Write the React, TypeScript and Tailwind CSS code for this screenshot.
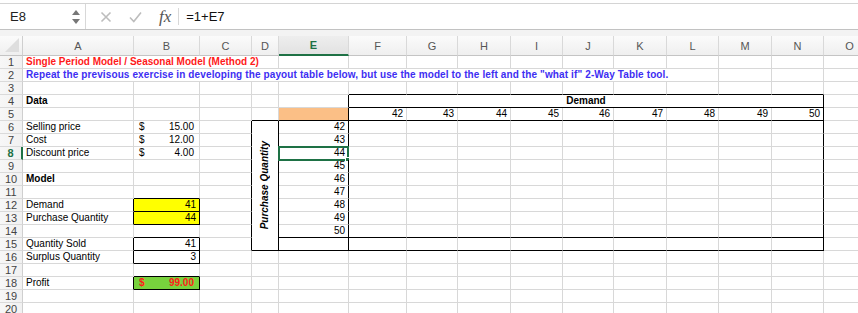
import React from "react";

type Cell = {
  col: number;
  span?: number;
  rows?: number;
  content?: React.ReactNode;
  cls?: string;
  selected?: boolean;
};

const COL_LETTERS = ["A", "B", "C", "D", "E", "F", "G", "H", "I", "J", "K", "L", "M", "N", "O"];

const spanCls: Record<number, string> = {
  1: "",
  4: "col-span-4",
  9: "col-span-9",
  12: "col-span-12",
};
const rowSpanCls: Record<number, string> = {
  1: "",
  10: "row-span-10",
};

const inRange = (v: number, a: number, b: number) => v >= a && v <= b;

function rightBlack(r: number, c: number) {
  if ((c === 1 || c === 2) && [12, 13, 15, 16, 18].includes(r)) return true;
  if ((c === 3 || c === 4) && inRange(r, 6, 15)) return true;
  if ((c === 5 || c === 14) && inRange(r, 4, 15)) return true;
  return false;
}

function bottomBlack(r: number, c: number) {
  if (c === 2 && inRange(r, 11, 18)) return true;
  if (inRange(c, 6, 14) && (r === 3 || r === 4)) return true;
  if (inRange(c, 4, 14) && r === 5) return true;
  if (inRange(c, 5, 14) && r === 14) return true;
  if (inRange(c, 4, 14) && r === 15) return true;
  return false;
}

const Acc = ({ v, cls = "" }: { v: string; cls?: string }) => (
  <div className={`flex w-full justify-between px-[5px] ${cls}`}>
    <span>$</span>
    <span>{v}</span>
  </div>
);

const Num = ({ v }: { v: string | number }) => <div className="w-full pr-[3px] text-right">{v}</div>;

const rowsData: Record<number, Cell[]> = {
  1: [
    {
      col: 1,
      span: 4,
      content: <span className="pl-[3px] font-bold text-[#ff1a1a]">Single Period Model / Seasonal Model (Method 2)</span>,
    },
  ],
  2: [
    {
      col: 1,
      span: 12,
      content: (
        <span className="pl-[3px] font-bold tracking-[0.12px] text-[#3d2ef2]">
          Repeat the previsous exercise in developing the payout table below, but use the model to the left and the
          "what if" 2-Way Table tool.
        </span>
      ),
    },
  ],
  4: [
    { col: 1, content: <span className="pl-[3px] font-bold">Data</span> },
    { col: 6, span: 9, content: <div className="w-full text-center font-bold">Demand</div> },
  ],
  5: [
    { col: 5, cls: "bg-[#fbbf86]" },
    ...[42, 43, 44, 45, 46, 47, 48, 49, 50].map((n, i) => ({ col: 6 + i, content: <Num v={n} /> })),
  ],
  6: [
    { col: 1, content: <span className="pl-[3px]">Selling price</span> },
    { col: 2, content: <Acc v="15.00" /> },
    {
      col: 4,
      rows: 10,
      content: (
        <div className="flex h-full w-full items-center justify-center">
          <span className="rotate-180 font-bold italic [writing-mode:vertical-rl]">Purchase Quantity</span>
        </div>
      ),
    },
    { col: 5, content: <Num v={42} /> },
  ],
  7: [
    { col: 1, content: <span className="pl-[3px]">Cost</span> },
    { col: 2, content: <Acc v="12.00" /> },
    { col: 5, content: <Num v={43} /> },
  ],
  8: [
    { col: 1, content: <span className="pl-[3px]">Discount price</span> },
    { col: 2, content: <Acc v="4.00" /> },
    { col: 5, content: <Num v={44} />, selected: true },
  ],
  9: [{ col: 5, content: <Num v={45} /> }],
  10: [
    { col: 1, content: <span className="pl-[3px] font-bold">Model</span> },
    { col: 5, content: <Num v={46} /> },
  ],
  11: [{ col: 5, content: <Num v={47} /> }],
  12: [
    { col: 1, content: <span className="pl-[3px]">Demand</span> },
    { col: 2, content: <Num v={41} />, cls: "bg-[#ffff00]" },
    { col: 5, content: <Num v={48} /> },
  ],
  13: [
    { col: 1, content: <span className="pl-[3px]">Purchase Quantity</span> },
    { col: 2, content: <Num v={44} />, cls: "bg-[#ffff00]" },
    { col: 5, content: <Num v={49} /> },
  ],
  14: [{ col: 5, content: <Num v={50} /> }],
  15: [
    { col: 1, content: <span className="pl-[3px]">Quantity Sold</span> },
    { col: 2, content: <Num v={41} /> },
  ],
  16: [
    { col: 1, content: <span className="pl-[3px]">Surplus Quantity</span> },
    { col: 2, content: <Num v={3} /> },
  ],
  18: [
    { col: 1, content: <span className="pl-[3px]">Profit</span> },
    { col: 2, content: <Acc v="99.00" cls="font-bold text-[#ff1a1a]" />, cls: "bg-[#78d23d]" },
  ],
};

function buildCells() {
  const out: React.ReactNode[] = [];
  out.push(
    <div
      key="corner"
      className="relative border-r border-b border-r-[#cfcfcf] border-b-[#c4c4c4] bg-linear-to-b from-[#fbfbfb] to-[#efefef]"
    >
      <svg className="absolute right-[3px] bottom-[3px]" width="14" height="14" viewBox="0 0 14 14">
        <polygon points="14,0 14,14 0,14" fill="#dedede" />
      </svg>
    </div>
  );
  COL_LETTERS.forEach((L) => {
    const isE = L === "E";
    out.push(
      <div
        key={"h" + L}
        className={`flex items-center justify-center border-r text-[11px] ${
          isE
            ? "border-b-2 border-b-[#1e7145] bg-linear-to-b from-[#eeeeee] to-[#e2e2e2] font-semibold text-[#1e7145]"
            : "border-b border-b-[#c4c4c4] bg-linear-to-b from-[#fbfbfb] to-[#efefef] text-[#555]"
        } border-r-[#d9d9d9]`}
      >
        {L}
      </div>
    );
  });

  const covered = new Set<string>();
  for (let r = 1; r <= 20; r++) {
    const sel = r === 8;
    out.push(
      <div
        key={"rh" + r}
        className={`flex items-center justify-center border-b border-b-[#dadada] bg-linear-to-r from-[#f7f7f7] to-[#f1f1f1] text-[11px] leading-none ${
          sel ? "border-r-2 border-r-[#1e7145] font-semibold text-[#1e7145]" : "border-r border-r-[#cfcfcf] text-[#444]"
        }`}
      >
        {r}
      </div>
    );
    const specs = rowsData[r] || [];
    for (let c = 1; c <= 15; c++) {
      if (covered.has(r + "," + c)) continue;
      const spec = specs.find((s) => s.col === c);
      const span = spec?.span ?? 1;
      const rows = spec?.rows ?? 1;
      const endC = c + span - 1;
      const endR = r + rows - 1;
      for (let rr = r; rr <= endR; rr++) for (let cc = c; cc <= endC; cc++) covered.add(rr + "," + cc);
      const rb = rightBlack(r, endC);
      const bb = bottomBlack(endR, c);
      out.push(
        <div
          key={r + "-" + c}
          className={`relative flex items-center overflow-visible whitespace-nowrap border-r border-b ${
            rb ? "border-r-black" : "border-r-[#d8d8d8]"
          } ${bb ? "border-b-black" : "border-b-[#d8d8d8]"} ${spanCls[span] ?? ""} ${rowSpanCls[rows] ?? ""} ${
            spec?.cls ?? ""
          }`}
        >
          {spec?.content}
          {spec?.selected && (
            <div className="pointer-events-none absolute -top-[1px] -left-[1px] h-[15px] w-[71px] border-2 border-[#1e7145]">
              <div className="absolute -right-[3px] -bottom-[3px] h-[5px] w-[5px] border border-white bg-[#1e7145]" />
            </div>
          )}
        </div>
      );
    }
  }
  return out;
}

export default function App() {
  return (
    <div className="h-[313px] w-[858px] overflow-hidden bg-white font-['Liberation_Sans',Arial,sans-serif] text-black">
      <div className="h-[33px] bg-[#f3f3f3]">
        <div className="mt-[3px] flex h-[27px] items-center border-t border-b border-t-[#d4d4d4] border-b-[#c2c2c2] bg-white">
          <div className="flex h-full w-[86px] items-center justify-between border-r border-r-[#d8d8d8] pr-[4px] pl-[10px]">
            <span className="text-[13px] text-[#222]">E8</span>
            <svg width="10" height="16" viewBox="0 0 10 16">
              <polygon points="5,1 9,6 1,6" fill="#777" />
              <polygon points="1,10 9,10 5,15" fill="#777" />
            </svg>
          </div>
          <div className="ml-[14px] flex items-center">
            <svg width="12" height="12" viewBox="0 0 12 12" className="text-[#bdbdbd]">
              <path d="M1.5 1.5 L10.5 10.5 M10.5 1.5 L1.5 10.5" stroke="currentColor" strokeWidth="1.6" fill="none" />
            </svg>
            <svg width="13" height="12" viewBox="0 0 13 12" className="ml-[17px] text-[#bdbdbd]">
              <path d="M1 6.5 L4.8 10.5 L12 1.5" stroke="currentColor" strokeWidth="1.6" fill="none" />
            </svg>
            <span className="ml-[17px] font-['Liberation_Serif',serif] text-[17px] italic leading-none text-[#555]">
              fx
            </span>
            <div className="ml-[7px] h-[17px] w-px bg-[#d8d8d8]" />
            <span className="ml-[7px] text-[13px] text-[#111]">=1+E7</span>
          </div>
        </div>
      </div>
      <div className="grid grid-cols-[23px_111px_66px_52px_27px_70px_58px_51px_53px_52px_51px_53px_52px_53px_52px_52px] grid-rows-[20px_repeat(20,13px)] text-[10px] leading-[12px]">
        {buildCells()}
      </div>
    </div>
  );
}
